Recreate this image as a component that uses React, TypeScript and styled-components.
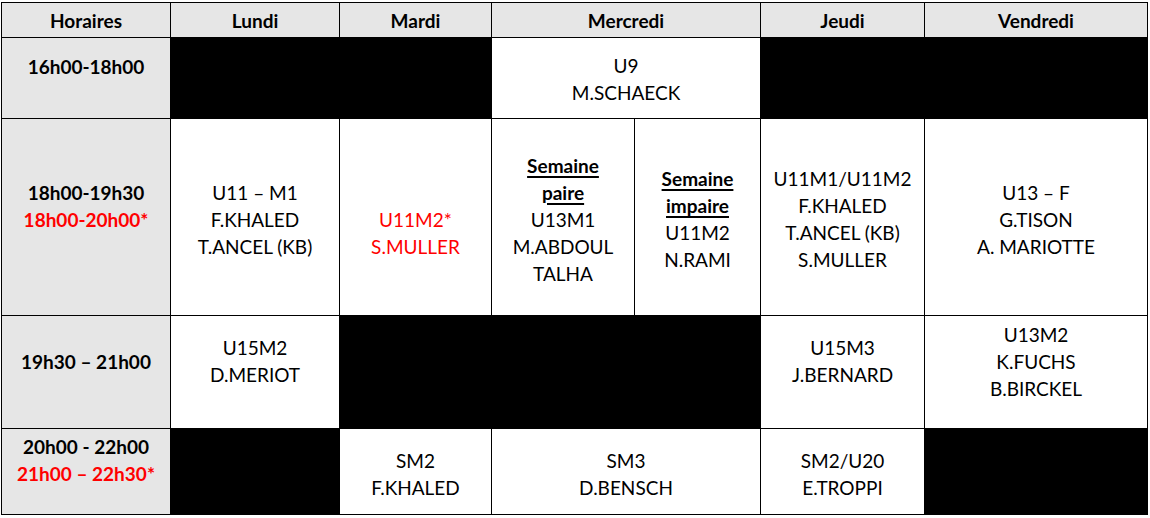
import styled, { createGlobalStyle } from 'styled-components';

const GlobalStyle = createGlobalStyle`
  body {
    margin: 0;
    background: #ffffff;
    font-family: Lato, "Open Sans", sans-serif;
  }
`;

const StyledPage = styled.div`
  padding: 2px 0 0 1px;
`;

const StyledGrid = styled.div`
  display: grid;
  grid-template-columns: 168px 168px 151px 142px 125px 163px 222px;
  grid-template-rows: 34px 80px 196px 112px 85px;
  gap: 1px;
  padding: 1px;
  width: max-content;
  background: #000000;
`;

type CellProps = {
  $col: string;
  $row: string;
  $shade?: 'head' | 'time' | 'blank' | 'plain';
  $shift?: number;
};

const StyledCell = styled.div<CellProps>`
  grid-column: ${({ $col }) => $col};
  grid-row: ${({ $row }) => $row};
  display: flex;
  flex-direction: column;
  align-items: center;
  justify-content: center;
  text-align: center;
  font-size: 19px;
  line-height: 27px;
  color: #000000;
  background: ${({ $shade }) =>
    $shade === 'head' || $shade === 'time'
      ? '#e6e6e6'
      : $shade === 'blank'
        ? '#000000'
        : '#ffffff'};
  font-weight: ${({ $shade }) => ($shade === 'head' || $shade === 'time' ? 700 : 400)};
  padding-top: ${({ $shift = 0 }) => ($shift > 0 ? $shift * 2 : 0)}px;
  padding-bottom: ${({ $shift = 0 }) => ($shift < 0 ? -$shift * 2 : 0)}px;
`;

const StyledLine = styled.span<{ $red?: boolean }>`
  display: block;
  white-space: nowrap;
  color: ${({ $red }) => ($red ? '#ff0000' : 'inherit')};
`;

const StyledWeekTitle = styled.span`
  display: block;
  font-weight: 700;
  text-decoration: underline;
  text-decoration-thickness: 2px;
  text-underline-offset: 3px;
`;

type Slot = {
  col: string;
  row: string;
  shade?: 'head' | 'time' | 'blank' | 'plain';
  shift?: number;
  title?: string[];
  lines?: string[];
  red?: string[];
};

const slots: Slot[] = [
  { col: '1', row: '1', shade: 'head', lines: ['Horaires'] },
  { col: '2', row: '1', shade: 'head', lines: ['Lundi'] },
  { col: '3', row: '1', shade: 'head', lines: ['Mardi'] },
  { col: '4 / 6', row: '1', shade: 'head', lines: ['Mercredi'] },
  { col: '6', row: '1', shade: 'head', lines: ['Jeudi'] },
  { col: '7', row: '1', shade: 'head', lines: ['Vendredi'] },

  { col: '1', row: '2', shade: 'time', shift: -12, lines: ['16h00-18h00'] },
  { col: '2 / 4', row: '2', shade: 'blank' },
  { col: '4 / 6', row: '2', shift: 1, lines: ['U9', 'M.SCHAECK'] },
  { col: '6 / 8', row: '2', shade: 'blank' },

  { col: '1', row: '3', shade: 'time', shift: -11, lines: ['18h00-19h30'], red: ['18h00-20h00*'] },
  { col: '2', row: '3', shift: 2, lines: ['U11 – M1', 'F.KHALED', 'T.ANCEL (KB)'] },
  { col: '3', row: '3', shift: 16, red: ['U11M2*', 'S.MULLER'] },
  { col: '4', row: '3', shift: 2, title: ['Semaine', 'paire'], lines: ['U13M1', 'M.ABDOUL', 'TALHA'] },
  { col: '5', row: '3', shift: 2, title: ['Semaine', 'impaire'], lines: ['U11M2', 'N.RAMI'] },
  { col: '6', row: '3', shift: 2, lines: ['U11M1/U11M2', 'F.KHALED', 'T.ANCEL (KB)', 'S.MULLER'] },
  { col: '7', row: '3', shift: 2, lines: ['U13 – F', 'G.TISON', 'A. MARIOTTE'] },

  { col: '1', row: '4', shade: 'time', shift: -11, lines: ['19h30 – 21h00'] },
  { col: '2', row: '4', shift: -11, lines: ['U15M2', 'D.MERIOT'] },
  { col: '3 / 6', row: '4', shade: 'blank' },
  { col: '6', row: '4', shift: -11, lines: ['U15M3', 'J.BERNARD'] },
  { col: '7', row: '4', shift: -11, lines: ['U13M2', 'K.FUCHS', 'B.BIRCKEL'] },

  { col: '1', row: '5', shade: 'time', shift: -12, lines: ['20h00 - 22h00'], red: ['21h00 – 22h30*'] },
  { col: '2', row: '5', shade: 'blank' },
  { col: '3', row: '5', shift: 2, lines: ['SM2', 'F.KHALED'] },
  { col: '4 / 6', row: '5', shift: 2, lines: ['SM3', 'D.BENSCH'] },
  { col: '6', row: '5', shift: 2, lines: ['SM2/U20', 'E.TROPPI'] },
  { col: '7', row: '5', shade: 'blank' },
];

export default function App() {
  return (
    <StyledPage>
      <GlobalStyle />
      <StyledGrid>
        {slots.map((slot, i) => (
          <StyledCell
            key={i}
            $col={slot.col}
            $row={slot.row}
            $shade={slot.shade}
            $shift={slot.shift}
          >
            {slot.title?.map((t) => (
              <StyledWeekTitle key={t}>{t}</StyledWeekTitle>
            ))}
            {slot.lines?.map((l) => (
              <StyledLine key={l}>{l}</StyledLine>
            ))}
            {slot.red?.map((l) => (
              <StyledLine key={l} $red>
                {l}
              </StyledLine>
            ))}
          </StyledCell>
        ))}
      </StyledGrid>
    </StyledPage>
  );
}
